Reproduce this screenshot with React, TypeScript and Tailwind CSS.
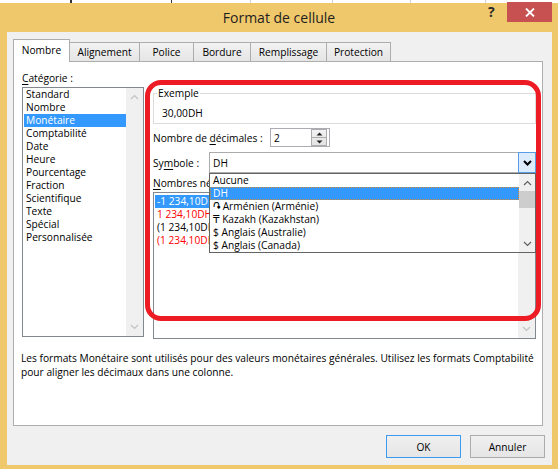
import React from "react";

function Chevron({ dir, color, bold }: { dir: "up" | "down"; color: string; bold?: boolean }) {
  return (
    <svg width="9" height="6" viewBox="0 0 9 6" className="block">
      <path
        d={dir === "up" ? "M1 5 L4.5 1.5 L8 5" : "M1 1 L4.5 4.5 L8 1"}
        fill="none"
        stroke={color}
        strokeWidth={bold ? 2 : 1.2}
      />
    </svg>
  );
}

function Triangle({ dir }: { dir: "up" | "down" }) {
  return (
    <svg width="7" height="4" viewBox="0 0 7 4" className="block">
      <path d={dir === "up" ? "M0.5 3.5 L3.5 0.5 L6.5 3.5 Z" : "M0.5 0.5 L3.5 3.5 L6.5 0.5 Z"} fill="#222" />
    </svg>
  );
}

export default function App() {
  const tabs = [
    { label: "Nombre", cls: "w-[57px]", active: true },
    { label: "Alignement", cls: "w-[71px]" },
    { label: "Police", cls: "w-[55px]" },
    { label: "Bordure", cls: "w-[58px]" },
    { label: "Remplissage", cls: "w-[77px]" },
    { label: "Protection", cls: "w-[65px]" },
  ];

  const categories = [
    "Standard",
    "Nombre",
    "Monétaire",
    "Comptabilité",
    "Date",
    "Heure",
    "Pourcentage",
    "Fraction",
    "Scientifique",
    "Texte",
    "Spécial",
    "Personnalisée",
  ];

  const negatives = [
    { text: "-1 234,10DH", selected: true },
    { text: "1 234,10DH", red: true },
    { text: "(1 234,10DH)" },
    { text: "(1 234,10DH)", red: true },
  ];

  const symbols = [
    "Aucune",
    "DH",
    "֏ Arménien (Arménie)",
    "₸ Kazakh (Kazakhstan)",
    "$ Anglais (Australie)",
    "$ Anglais (Canada)",
  ];

  return (
    <div className="relative w-[558px] h-[469px] overflow-hidden bg-[#f0c86c] font-['Segoe_UI','Open_Sans','DejaVu_Sans',sans-serif] text-[10.2px] leading-[14px] text-black">
      {/* bit of the sheet behind the dialog */}
      <div className="h-[3px] bg-white flex">
        <div className="ml-[70px] w-[2px] bg-[#333]" />
        <div className="ml-[99px] w-px bg-[#333]" />
        <div className="ml-[78px] w-px bg-[#cfcfcf]" />
        <div className="ml-[81px] w-px bg-[#cfcfcf]" />
        <div className="ml-[77px] w-px bg-[#cfcfcf]" />
        <div className="ml-[74px] w-px bg-[#cfcfcf]" />
      </div>

      {/* title bar */}
      <div className="relative h-[29px] flex items-center justify-center">
        <span className="text-[14px] text-[#1e1e1e]">Format de cellule</span>
        <span className="absolute left-[488px] top-[2px] text-[14px] font-bold text-[#2b2b2b]">?</span>
        <div className="absolute right-[6px] -top-px w-[45px] h-[20px] bg-[#c75050] flex items-center justify-center">
          <svg width="10" height="9" viewBox="0 0 10 9">
            <path d="M1 0.5 L9 8.5 M9 0.5 L1 8.5" stroke="#fff" strokeWidth="1.8" />
          </svg>
        </div>
      </div>

      {/* client area */}
      <div className="ml-[7px] w-[545px] h-[433px] bg-[#f0f0f0] pt-[7px] pl-[6px]">
        <div className="flex items-end h-[22px]">
          {tabs.map((t, i) =>
            t.active ? (
              <div
                key={i}
                className={`${t.cls} relative z-10 -mb-px h-[23px] bg-white border border-b-0 border-[#adadad] flex items-center justify-center pb-[2px]`}
              >
                {t.label}
              </div>
            ) : (
              <div
                key={i}
                className={`${t.cls} -ml-px h-[19px] bg-gradient-to-b from-[#f2f2f2] to-[#e5e5e5] border border-b-0 border-[#adadad] flex items-center justify-center`}
              >
                {t.label}
              </div>
            )
          )}
        </div>

        <div className="w-[530px] h-[365px] bg-white border border-[#adadad] flex flex-col">
          <div className="flex">
            {/* categories */}
            <div className="ml-[8px] pt-[9px] w-[122px]">
              <div className="h-[14px]">
                <span className="underline underline-offset-2">C</span>atégorie :
              </div>
              <div className="mt-[2px] h-[250px] border border-[#828790] flex">
                <div className="flex-1 pl-px">
                  {categories.map((c, i) => (
                    <div
                      key={i}
                      className={`h-[13px] leading-[13px] pl-[2px] ${i === 2 ? "bg-[#3399ff] text-white" : ""}`}
                    >
                      {c}
                    </div>
                  ))}
                </div>
                <div className="w-[17px] bg-[#f0f0f0] flex flex-col justify-between items-center py-[6px]">
                  <Chevron dir="up" color="#c2c2c2" />
                  <Chevron dir="down" color="#c2c2c2" />
                </div>
              </div>
            </div>

            {/* right column */}
            <div className="ml-[9px] w-[383px] pt-[24px]">
              <fieldset className="border border-[#dcdcdc] px-[3px] pb-[3px]">
                <legend className="px-px leading-[14px]">Exemple</legend>
                <div className="mt-[6px] ml-[5px] h-[14px]">30,00DH</div>
              </fieldset>

              <div className="mt-[4px] h-[19px] flex items-center">
                <div className="w-[117px] whitespace-nowrap">
                  Nombre de <span className="underline underline-offset-2">d</span>écimales :
                </div>
                <div className="w-[60px] h-[19px] border border-[#abadb3] bg-white flex items-center justify-between pl-[3px] pr-[2px]">
                  <span>2</span>
                  <div className="w-[16px] h-[17px] border border-[#acacac] bg-gradient-to-b from-[#f2f2f2] to-[#e3e3e3] flex flex-col">
                    <div className="flex-1 flex items-center justify-center border-b border-[#acacac]">
                      <Triangle dir="up" />
                    </div>
                    <div className="flex-1 flex items-center justify-center">
                      <Triangle dir="down" />
                    </div>
                  </div>
                </div>
              </div>

              <div className="mt-[5px] h-[21px] flex items-center">
                <div className="w-[56px] whitespace-nowrap">
                  Sy<span className="underline underline-offset-2">m</span>bole :
                </div>
                <div className="relative w-[327px] h-[21px]">
                  <div className="h-full border border-[#acacac] bg-white flex items-center pl-[3px]">
                    <span>DH</span>
                    <div className="ml-auto -my-px -mr-px w-[18px] h-[21px] bg-[#dcecfc] border border-[#569de5] flex items-center justify-center">
                      <Chevron dir="down" color="#000" bold />
                    </div>
                  </div>

                  {/* open drop-down list */}
                  <div className="absolute left-0 top-[21px] z-20 w-[327px] h-[80px] bg-white border border-[#646464] flex">
                    <div className="flex-1">
                      {symbols.map((s, i) => (
                        <div
                          key={i}
                          className={`h-[13px] leading-[13px] pl-[3px] whitespace-nowrap ${
                            i === 1
                              ? "bg-[#3399ff] text-white outline-1 outline-dotted outline-[#d08a3a] -outline-offset-1"
                              : ""
                          }`}
                        >
                          {s}
                        </div>
                      ))}
                    </div>
                    <div className="w-[16px] bg-[#f0f0f0] flex flex-col items-center">
                      <div className="h-[17px] flex items-center justify-center">
                        <Chevron dir="up" color="#606060" />
                      </div>
                      <div className="w-[16px] h-[17px] bg-[#cdcdcd]" />
                      <div className="mt-auto h-[17px] flex items-center justify-center">
                        <Chevron dir="down" color="#606060" />
                      </div>
                    </div>
                  </div>
                </div>
              </div>

              <div className="mt-[3px] h-[14px] whitespace-nowrap">
                <span className="underline underline-offset-2">N</span>ombres négatifs :
              </div>
              <div className="mt-[2px] h-[147px] border border-[#828790] flex">
                <div className="flex-1 pl-px pt-[2px]">
                  {negatives.map((n, i) => (
                    <div
                      key={i}
                      className={`h-[13px] leading-[13px] pl-[2px] w-fit pr-[2px] ${
                        n.selected ? "bg-[#3399ff] text-white" : n.red ? "text-[#ff0000]" : ""
                      }`}
                    >
                      {n.text}
                    </div>
                  ))}
                </div>
                <div className="w-[17px] bg-[#f0f0f0] flex flex-col justify-end items-center pb-[6px]">
                  <Chevron dir="down" color="#c2c2c2" />
                </div>
              </div>
            </div>
          </div>

          <div className="mt-[12px] ml-[7px] whitespace-nowrap">
            Les formats Monétaire sont utilisés pour des valeurs monétaires générales. Utilisez les formats Comptabilité
            <br />
            pour aligner les décimaux dans une colonne.
          </div>
        </div>

        <div className="mt-[9px] ml-[373px] flex gap-[9px]">
          <button className="w-[75px] h-[23px] border border-[#3c9bf0] bg-gradient-to-b from-[#f0f0f0] to-[#e5e5e5] text-[10.2px]">
            OK
          </button>
          <button className="w-[75px] h-[23px] border border-[#acacac] bg-gradient-to-b from-[#f0f0f0] to-[#e5e5e5] text-[10.2px]">
            Annuler
          </button>
        </div>
      </div>

      {/* red annotation frame */}
      <div className="pointer-events-none absolute left-[145px] top-[80px] z-30 w-[396px] h-[241px] rounded-[16px] border-[5px] border-[#ed1c24]" />
    </div>
  );
}
